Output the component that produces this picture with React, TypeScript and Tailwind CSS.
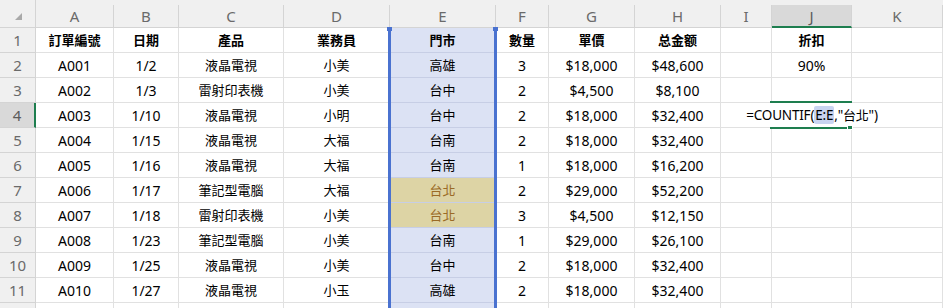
const columns = ["A", "B", "C", "D", "E", "F", "G", "H", "I", "J", "K"];

const rows: string[][] = [
  ["訂單編號", "日期", "產品", "業務員", "門市", "數量", "單價", "总金额", "", "折扣", ""],
  ["A001", "1/2", "液晶電視", "小美", "高雄", "3", "$18,000", "$48,600", "", "90%", ""],
  ["A002", "1/3", "雷射印表機", "小美", "台中", "2", "$4,500", "$8,100", "", "", ""],
  ["A003", "1/10", "液晶電視", "小明", "台中", "2", "$18,000", "$32,400", "", "", ""],
  ["A004", "1/15", "液晶電視", "大福", "台南", "2", "$18,000", "$32,400", "", "", ""],
  ["A005", "1/16", "液晶電視", "大福", "台南", "1", "$18,000", "$16,200", "", "", ""],
  ["A006", "1/17", "筆記型電腦", "大福", "台北", "2", "$29,000", "$52,200", "", "", ""],
  ["A007", "1/18", "雷射印表機", "小美", "台北", "3", "$4,500", "$12,150", "", "", ""],
  ["A008", "1/23", "筆記型電腦", "小美", "台南", "1", "$29,000", "$26,100", "", "", ""],
  ["A009", "1/25", "液晶電視", "小美", "台中", "2", "$18,000", "$32,400", "", "", ""],
  ["A010", "1/27", "液晶電視", "小玉", "高雄", "2", "$18,000", "$32,400", "", "", ""],
  ["", "", "", "", "", "", "", "", "", "", ""],
];

const isCjk = (s: string) => /[^\x00-\x7f]/.test(s);

const Formula = () => (
  <span className="relative z-10 whitespace-nowrap text-[13.5px] tracking-[-0.2px] text-black">
    =COUNTIF(
    <span className="rounded-[2px] bg-[#c9d4f1] px-[1px]">E:E</span>
    ,"<span className="text-[13px]">台北</span>")
  </span>
);

export default function App() {
  return (
    <div
      className="relative h-[308px] w-[943px] overflow-hidden bg-white"
      style={{ fontFamily: '"Noto Sans", "Noto Sans CJK TC", sans-serif' }}
    >
      <div className="grid grid-cols-[36px_78px_65px_105px_106px_106px_53px_86px_86px_51px_80px_1fr] grid-rows-[28px_repeat(12,25px)]">
        {/* column header row */}
        <div className="flex items-end border-b border-r border-[#d4d4d4] bg-[#f0f0f0]">
          <div className="flex h-[23px] w-full items-start pl-[15px] pt-[9px]">
            <svg width="7" height="7" viewBox="0 0 7 7">
              <polygon points="7,0 7,7 0,7" fill="#a9a9a9" />
            </svg>
          </div>
        </div>
        {columns.map((c) => (
          <div key={c} className="flex items-end bg-[#f0f0f0]">
            <div
              className={
                c === "J"
                  ? "flex h-[23px] w-full items-center justify-center border-b-2 border-r border-b-[#1e7e4f] border-r-[#d4d4d4] bg-[#d9d9d9] pt-[2px] text-[15px] text-[#5b5b5b]"
                  : "flex h-[23px] w-full items-center justify-center border-b border-r border-[#d4d4d4] pt-[1px] text-[15px] text-[#6a6a6a]"
              }
            >
              {c}
            </div>
          </div>
        ))}

        {rows.map((row, r) => (
          <div key={r} className="contents">
            <div
              className={
                r === 3
                  ? "flex items-center justify-center border-b border-r-2 border-b-[#d4d4d4] border-r-[#1e7e4f] bg-[#d9d9d9] pt-[1px] text-[15px] text-[#5b5b5b]"
                  : "flex items-center justify-center border-b border-r border-[#d4d4d4] bg-[#f0f0f0] pt-[1px] text-[15px] text-[#6a6a6a]"
              }
            >
              {r < 11 ? r + 1 : ""}
            </div>
            {row.map((v, c) => {
              const colE = c === 4;
              const yellow = colE && (r === 6 || r === 7);
              const noRight = r === 3 && (c === 8 || c === 9);
              let cls =
                "flex items-center justify-center whitespace-nowrap border-b pt-[1px] ";
              cls += noRight ? "" : "border-r ";
              if (yellow) cls += "border-[#c7cee5] bg-[#ddd4a5] text-[#9a6a26] ";
              else if (colE) cls += "border-[#c7cee5] bg-[#dce2f4] text-black ";
              else cls += "border-[#e1e1e1] text-black ";
              cls += isCjk(v) ? "text-[13px] " : "text-[14px] ";
              if (r === 0) cls += "font-semibold ";
              return (
                <div key={c} className={cls}>
                  {r === 3 && c === 9 ? <Formula /> : v}
                </div>
              );
            })}
          </div>
        ))}
      </div>

      {/* column E selection frame */}
      <div className="pointer-events-none absolute bottom-0 left-[388px] top-[28px] w-[109px] border-x-[3px] border-[#4a72d0]" />
      <div className="pointer-events-none absolute left-[387px] top-[27px] h-[4px] w-[5px] bg-[#4a72d0]" />
      <div className="pointer-events-none absolute left-[493px] top-[27px] h-[4px] w-[5px] bg-[#4a72d0]" />

      {/* active cell J4 */}
      <div className="pointer-events-none absolute left-[770px] top-[101px] h-[28px] w-[82px] border-y-2 border-[#1e7e4f]" />
      <div className="pointer-events-none absolute left-[847px] top-[125px] h-[5px] w-[6px] border border-white bg-[#1e7e4f]" />
    </div>
  );
}
